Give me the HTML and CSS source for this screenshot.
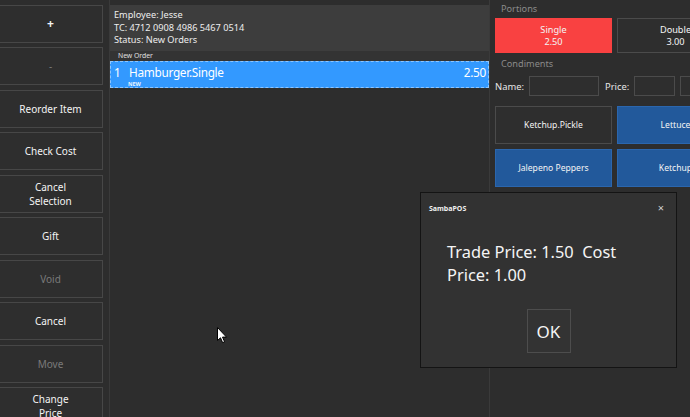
FILE: index.html
```html
<!DOCTYPE html>
<html>
<head>
<meta charset="utf-8">
<link rel="stylesheet" href="styles.css">
</head>
<body>
<div class="app">
  <div class="commands">
    <div class="cmd plus">+</div>
    <div class="cmd disabled">-</div>
    <div class="cmd">Reorder Item</div>
    <div class="cmd">Check Cost</div>
    <div class="cmd">Cancel<br>Selection</div>
    <div class="cmd">Gift</div>
    <div class="cmd disabled">Void</div>
    <div class="cmd">Cancel</div>
    <div class="cmd disabled">Move</div>
    <div class="cmd">Change<br>Price</div>
  </div>
  <div class="ticket">
    <div class="ticket-head">
      <div>Employee: Jesse</div>
      <div>TC: 4712 0908 4986 5467 0514</div>
      <div>Status: New Orders</div>
    </div>
    <div class="group-label">New Order</div>
    <div class="order">
      <div class="order-main">
        <span class="qty">1</span>
        <span class="name">Hamburger.Single</span>
        <span class="price">2.50</span>
      </div>
      <div class="tag">NEW</div>
    </div>
  </div>
  <div class="side">
    <div class="section-title">Portions</div>
    <div class="grid">
      <div class="tile red"><span>Single</span><span>2.50</span></div>
      <div class="tile"><span>Double</span><span>3.00</span></div>
    </div>
    <div class="section-title cond">Condiments</div>
    <div class="fields">
      <span class="lbl">Name:</span>
      <span class="input w70"></span>
      <span class="lbl">Price:</span>
      <span class="input w41"></span>
      <span class="input w41"></span>
    </div>
    <div class="grid cgrid">
      <div class="tile tall">Ketchup.Pickle</div>
      <div class="tile tall blue">Lettuce</div>
      <div class="tile tall blue">Jalepeno Peppers</div>
      <div class="tile tall blue">Ketchup</div>
    </div>
  </div>
</div>

<div class="dialog">
  <div class="dlg-title">
    <span class="dlg-name">SambaPOS</span>
    <span class="dlg-close">&#215;</span>
  </div>
  <div class="dlg-msg">Trade Price: 1.50&nbsp; Cost<br>Price: 1.00</div>
  <div class="dlg-actions"><div class="ok">OK</div></div>
</div>

<svg class="cursor" width="12" height="18" viewBox="0 0 12 18">
  <path d="M0.5 0.5 L0.5 13.5 L3.5 10.8 L5.6 15.6 L7.6 14.8 L5.5 10.1 L9.5 10.1 Z" fill="#fff" stroke="#000" stroke-width="1"/>
</svg>
</body>
</html>
```
FILE: styles.css
```css
html, body {
  margin: 0;
  padding: 0;
}
body {
  width: 690px;
  height: 417px;
  overflow: hidden;
  background: #2d2d2d;
  font-family: "Noto Sans", "Open Sans", sans-serif;
  color: #f2f2f2;
  position: relative;
}
.app {
  display: flex;
  align-items: flex-start;
  height: 417px;
}
.commands {
  margin-left: -2px;
  width: 105px;
  padding-top: 5px;
  display: flex;
  flex-direction: column;
  gap: 4.44px;
  flex: none;
}
.cmd {
  box-sizing: border-box;
  height: 38px;
  border: 1px solid #474747;
  background: #2e2e2e;
  display: flex;
  align-items: center;
  justify-content: center;
  text-align: center;
  font-size: 10px;
  line-height: 14px;
  color: #f4f4f4;
  flex: none;
}
.cmd.plus {
  font-size: 12px;
  font-weight: bold;
}
.cmd.disabled {
  color: #7a7a7a;
}
.ticket {
  margin-left: 6px;
  box-sizing: border-box;
  width: 381px;
  height: 417px;
  padding-top: 5px;
  border-left: 1px solid #3a3a3a;
  border-right: 1px solid #3a3a3a;
  flex: none;
}
.ticket-head {
  background: #3d3d3d;
  height: 46px;
  box-sizing: border-box;
  padding: 4px 0 0 4px;
  font-size: 9.2px;
  line-height: 12.6px;
  color: #ededed;
}
.group-label {
  height: 10px;
  background: #333333;
  font-size: 6.8px;
  line-height: 10px;
  padding-left: 8px;
  color: #e0e0e0;
}
.order {
  box-sizing: border-box;
  height: 27px;
  background: #3399ff;
  border: 1px dashed #8ec6ff;
  padding: 2px 2px 0 3px;
  color: #fff;
  position: relative;
}
.order-main {
  display: flex;
  align-items: center;
  font-size: 11.8px;
  letter-spacing: -0.3px;
  line-height: 17px;
}
.qty {
  width: 15px;
}
.name {
  flex: 1;
}
.tag {
  font-size: 5.5px;
  font-weight: bold;
  line-height: 6px;
  padding-left: 14px;
  color: #e8f3ff;
}
.side {
  padding-left: 5px;
  flex: none;
  width: 260px;
}
.section-title {
  font-size: 9.2px;
  line-height: 13px;
  color: #8a8a8a;
  padding-left: 6px;
  padding-top: 2px;
  height: 16px;
}
.section-title.cond {
  padding-top: 4px;
  height: 15px;
}
.grid {
  display: grid;
  grid-template-columns: 117px 117px;
  column-gap: 5px;
  row-gap: 5px;
}
.tile {
  box-sizing: border-box;
  height: 35px;
  border: 1px solid #4b4b4b;
  background: #2e2e2e;
  display: flex;
  flex-direction: column;
  align-items: center;
  justify-content: center;
  font-size: 9.2px;
  line-height: 12px;
  color: #f4f4f4;
  text-align: center;
}
.tile.red {
  background: #f94141;
  border-color: #f94141;
}
.tile.blue {
  background: #22599b;
  border-color: #2b66ad;
}
.tile.tall {
  height: 38px;
  font-size: 8.6px;
}
.fields {
  display: flex;
  align-items: center;
  height: 20px;
  margin-top: 4px;
  margin-left: 0;
  font-size: 9.4px;
  color: #e6e6e6;
}
.lbl {
  margin-right: 5px;
}
.input {
  box-sizing: border-box;
  height: 20px;
  border: 1px solid #4b4b4b;
  background: #2e2e2e;
  margin-right: 6px;
  flex: none;
}
.w70 { width: 70px; }
.w41 { width: 41px; margin-right: 5px; }
.cgrid {
  margin-top: 10px;
}
.dialog {
  position: absolute;
  left: 420px;
  top: 192px;
  width: 257px;
  height: 176px;
  box-sizing: border-box;
  background: #323232;
  border: 1px solid #141414;
}
.dlg-title {
  display: flex;
  justify-content: space-between;
  align-items: center;
  height: 28px;
  padding: 0 12px 0 8px;
  box-sizing: border-box;
}
.dlg-name {
  font-size: 7px;
  font-weight: bold;
  color: #f0f0f0;
  margin-top: 2px;
}
.dlg-close {
  font-size: 11px;
  color: #d0d0d0;
}
.dlg-msg {
  padding-left: 26px;
  padding-top: 19px;
  font-size: 16.4px;
  line-height: 23px;
  color: #f5f5f5;
}
.dlg-actions {
  display: flex;
  justify-content: center;
  margin-top: 23px;
}
.ok {
  box-sizing: border-box;
  width: 44px;
  height: 44px;
  border: 1px solid #4d4d4d;
  background: #333333;
  display: flex;
  align-items: center;
  justify-content: center;
  font-size: 17px;
  color: #f5f5f5;
}
.cursor {
  position: absolute;
  left: 217px;
  top: 327px;
}
```
